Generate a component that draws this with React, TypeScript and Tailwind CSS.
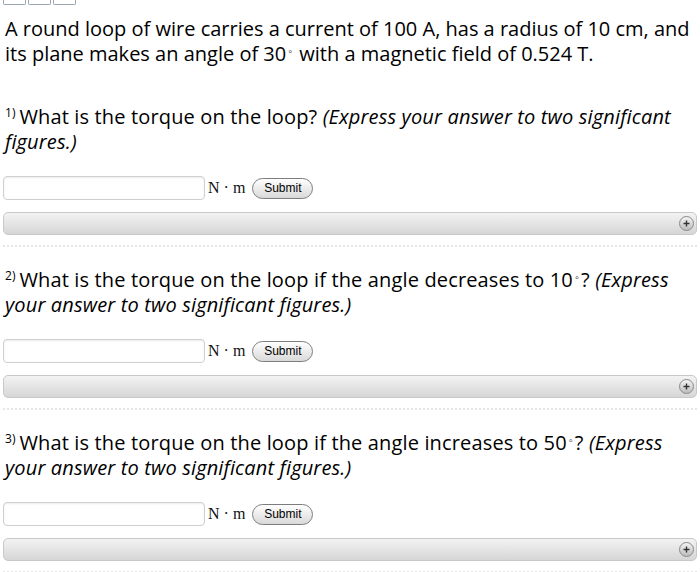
import React from "react";

const questions = [
  { n: 1, text: "What is the torque on the loop?" },
  { n: 2, text: "What is the torque on the loop if the angle decreases to 10", deg: true },
  { n: 3, text: "What is the torque on the loop if the angle increases to 50", deg: true },
];

function Deg() {
  return <span className="relative top-[-6px] mx-[2px] text-[11px] leading-none">{"\u25E6"}</span>;
}

function PlusIcon() {
  return (
    <span className="flex h-[15px] w-[15px] items-center justify-center rounded-full border border-[#8a8a8a] bg-gradient-to-b from-[#f4f4f4] to-[#bdbdbd]">
      <svg width="9" height="9" viewBox="0 0 9 9">
        <path d="M4.5 1.5v6M1.5 4.5h6" stroke="#333" strokeWidth="1.4" />
      </svg>
    </span>
  );
}

function Question({ n, text, deg }: { n: number; text: string; deg?: boolean }) {
  return (
    <div className="pt-[20px]">
      <p className="pl-[2px] text-[20px] leading-[25px] tracking-[0.15px] text-black">
        <span className="relative top-[-7px] mr-[4px] text-[12px] leading-none tracking-normal">{n})</span>
        {text}
        {deg && (
          <>
            <Deg />?
          </>
        )}{" "}
        <em>(Express your answer to two significant figures.)</em>
      </p>
      <div className="mt-[22px] flex items-center">
        <input
          type="text"
          className="h-[24px] w-[202px] rounded-[4px] border border-[#cfcfcf] bg-white shadow-[inset_0_1px_2px_rgba(0,0,0,0.08)] outline-none"
        />
        <span className="ml-[3px] font-['Liberation_Serif',serif] text-[16px] text-[#111]">N · m</span>
        <button className="ml-[7px] h-[21px] w-[61px] rounded-full border border-[#7d7d7d] bg-gradient-to-b from-[#ffffff] to-[#d9d9d9] font-['Liberation_Sans',sans-serif] text-[12px] text-black">
          Submit
        </button>
      </div>
      <div className="mt-[12px] flex h-[23px] items-center justify-end rounded-[5px] border border-[#c9c9c9] bg-gradient-to-b from-[#f3f3f3] to-[#d6d6d6] pr-[2px]">
        <PlusIcon />
      </div>
      <div className="mt-[10px] border-t-2 border-dotted border-[#e6e6e6]" />
    </div>
  );
}

export default function App() {
  return (
    <div className="h-[572px] w-[700px] overflow-hidden bg-white px-[3px] font-['Open_Sans',sans-serif] [font-variant-ligatures:none]">
      <div className="flex gap-[2px]">
        <div className="h-[5px] w-[23px] rounded-b-[2px] border border-t-0 border-[#9aa6b4]" />
        <div className="h-[5px] w-[23px] rounded-b-[2px] border border-t-0 border-[#9aa6b4]" />
        <div className="h-[5px] w-[23px] rounded-b-[2px] border border-t-0 border-[#9aa6b4]" />
      </div>
      <p className="mt-[11px] pl-[2px] text-[20px] leading-[25px] tracking-[0px] text-black">
        A round loop of wire carries a current of 100 A, has a radius of 10 cm, and its plane makes an angle of 30
        <Deg /> with a magnetic field of 0.524 T.
      </p>
      <div className="mt-[18px]">
        {questions.map((q) => (
          <Question key={q.n} n={q.n} text={q.text} deg={q.deg} />
        ))}
      </div>
    </div>
  );
}
